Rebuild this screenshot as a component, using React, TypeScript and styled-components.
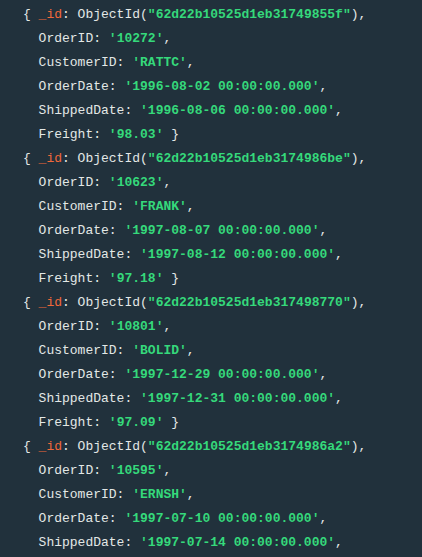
import React from "react";
import styled, { createGlobalStyle } from "styled-components";

const Global = createGlobalStyle`
  html, body { margin: 0; padding: 0; background: #21313c; }
  body { overflow: hidden; }
`;

const Page = styled.div`
  background: #21313c;
  width: 422px;
  height: 557px;
  overflow: hidden;
  padding: 3px 0 0 23px;
  box-sizing: border-box;
  font-family: "Liberation Mono", "DejaVu Sans Mono", monospace;
  font-size: 13px;
  color: #e3e8e6;
`;

const Line = styled.div<{ $indent?: boolean }>`
  height: 24px;
  line-height: 24px;
  white-space: pre;
  padding-left: ${(p) => (p.$indent ? "15.6px" : "0")};
`;

const Str = styled.span`
  color: #35d97b;
  font-weight: bold;
`;

const IdKey = styled.span`
  color: #f0683a;
`;

type Doc = {
  id: string;
  orderId: string;
  customer: string;
  orderDate: string;
  shipped: string;
  freight?: string;
};

const docs: Doc[] = [
  { id: "62d22b10525d1eb31749855f", orderId: "10272", customer: "RATTC", orderDate: "1996-08-02 00:00:00.000", shipped: "1996-08-06 00:00:00.000", freight: "98.03" },
  { id: "62d22b10525d1eb3174986be", orderId: "10623", customer: "FRANK", orderDate: "1997-08-07 00:00:00.000", shipped: "1997-08-12 00:00:00.000", freight: "97.18" },
  { id: "62d22b10525d1eb317498770", orderId: "10801", customer: "BOLID", orderDate: "1997-12-29 00:00:00.000", shipped: "1997-12-31 00:00:00.000", freight: "97.09" },
  { id: "62d22b10525d1eb3174986a2", orderId: "10595", customer: "ERNSH", orderDate: "1997-07-10 00:00:00.000", shipped: "1997-07-14 00:00:00.000" },
];

export default function App() {
  return (
    <>
      <Global />
      <Page>
        {docs.map((d) => (
          <React.Fragment key={d.id}>
            <Line>
              {"{ "}
              <IdKey>_id</IdKey>
              {": ObjectId("}
              <Str>"{d.id}"</Str>
              {"),"}
            </Line>
            <Line $indent>
              {"OrderID: "}
              <Str>'{d.orderId}'</Str>,
            </Line>
            <Line $indent>
              {"CustomerID: "}
              <Str>'{d.customer}'</Str>,
            </Line>
            <Line $indent>
              {"OrderDate: "}
              <Str>'{d.orderDate}'</Str>,
            </Line>
            <Line $indent>
              {"ShippedDate: "}
              <Str>'{d.shipped}'</Str>,
            </Line>
            {d.freight && (
              <Line $indent>
                {"Freight: "}
                <Str>'{d.freight}'</Str>
                {" }"}
              </Line>
            )}
          </React.Fragment>
        ))}
      </Page>
    </>
  );
}
